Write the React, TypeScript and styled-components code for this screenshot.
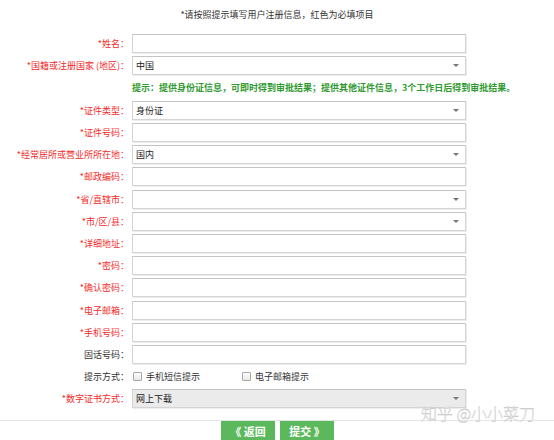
import styled, { createGlobalStyle } from "styled-components";

interface field {
  label: string;
  required: boolean;
  kind: "text" | "select";
  value?: string;
}

const GlobalStyle = createGlobalStyle`
  html, body {
    margin: 0;
    padding: 0;
    background: #ffffff;
  }

  body {
    font-family: "Noto Sans CJK SC", "DejaVu Sans", sans-serif;
    color: #333333;
  }
`;

const topFields: Array<field> = [
  { label: "姓名", required: true, kind: "text" },
  { label: "国籍或注册国家 (地区)", required: true, kind: "select", value: "中国" },
];

const restFields: Array<field> = [
  { label: "证件类型", required: true, kind: "select", value: "身份证" },
  { label: "证件号码", required: true, kind: "text" },
  { label: "经常居所或营业所所在地", required: true, kind: "select", value: "国内" },
  { label: "邮政编码", required: true, kind: "text" },
  { label: "省/直辖市", required: true, kind: "select" },
  { label: "市/区/县", required: true, kind: "select" },
  { label: "详细地址", required: true, kind: "text" },
  { label: "密码", required: true, kind: "text" },
  { label: "确认密码", required: true, kind: "text" },
  { label: "电子邮箱", required: true, kind: "text" },
  { label: "手机号码", required: true, kind: "text" },
  { label: "固话号码", required: false, kind: "text" },
];

const FormRow = ({ item }: { item: field }) => (
  <Row>
    <Label required={item.required}>
      {item.required ? "*" : ""}
      {item.label}：
    </Label>
    {item.kind === "text" ? (
      <TextBox />
    ) : (
      <SelectBox>
        <span>{item.value}</span>
        <Arrow />
      </SelectBox>
    )}
  </Row>
);

const App = () => {
  return (
    <Page>
      <GlobalStyle />
      <Title>*请按照提示填写用户注册信息，红色为必填项目</Title>
      {topFields.map((item) => (
        <FormRow key={item.label} item={item} />
      ))}
      <Hint>
        提示：提供身份证信息，可即时得到审批结果；提供其他证件信息，3个工作日后得到审批结果。
      </Hint>
      {restFields.map((item) => (
        <FormRow key={item.label} item={item} />
      ))}
      <Row>
        <Label required={false}>提示方式：</Label>
        <Options>
          <Option>
            <Check />
            手机短信提示
          </Option>
          <Option>
            <Check />
            电子邮箱提示
          </Option>
        </Options>
      </Row>
      <Row>
        <Label required>*数字证书方式：</Label>
        <SelectBox disabled>
          <span>网上下载</span>
          <Arrow />
        </SelectBox>
      </Row>
      <Footer>
        <Button>《 返回</Button>
        <Button>提交 》</Button>
      </Footer>
      <Watermark>知乎 @小小菜刀</Watermark>
    </Page>
  );
};

const Page = styled.div`
  position: relative;
  width: 554px;
  height: 440px;
  overflow: hidden;
  font-size: 9px;
`;

const Title = styled.div`
  height: 32.7px;
  line-height: 30px;
  text-align: center;
  color: #333333;
`;

const Row = styled.div`
  display: flex;
  align-items: center;
  height: 22.2px;
`;

const Label = styled.div<{ required: boolean }>`
  width: 129px;
  margin-right: 3px;
  text-align: right;
  white-space: nowrap;
  color: ${(props) => (props.required ? "#f22a2a" : "#333333")};
`;

const TextBox = styled.div`
  box-sizing: border-box;
  width: 334px;
  height: 19px;
  background: #ffffff;
  border: 1px solid #d4d4d4;
  border-top-color: #c4c4c4;
  box-shadow: 1px 1px 0 #ededed;
`;

const SelectBox = styled(TextBox)<{ disabled?: boolean }>`
  display: flex;
  align-items: center;
  justify-content: space-between;
  padding: 0 6px 0 3px;
  color: #222222;
  background: ${(props) => (props.disabled ? "#ebebeb" : "#ffffff")};
`;

const Arrow = styled.i`
  width: 0;
  height: 0;
  border-left: 3px solid transparent;
  border-right: 3px solid transparent;
  border-top: 3px solid #777777;
`;

const Hint = styled.div`
  height: 22.2px;
  line-height: 22.2px;
  padding-left: 132px;
  color: #2f9a2f;
  font-weight: bold;
  white-space: nowrap;
`;

const Options = styled.div`
  display: flex;
  align-items: center;
  gap: 42px;
  padding-left: 1px;
`;

const Option = styled.label`
  display: flex;
  align-items: center;
  gap: 4px;
  color: #333333;
`;

const Check = styled.span`
  box-sizing: border-box;
  width: 9px;
  height: 9px;
  border: 1px solid #a9a9a9;
  border-radius: 1px;
  background: linear-gradient(#ffffff, #e6e6e6);
`;

const Footer = styled.div`
  display: flex;
  justify-content: center;
  gap: 5px;
  margin-top: 10.5px;
  padding-left: 1px;
  border-top: 1px solid #e4e4e4;
`;

const Button = styled.div`
  width: 54px;
  height: 22px;
  line-height: 20px;
  text-align: center;
  background: #5cb85c;
  color: #ffffff;
  font-size: 11px;
  font-weight: bold;
`;

const Watermark = styled.div`
  position: absolute;
  left: 421px;
  top: 401px;
  font-size: 16px;
  font-weight: 300;
  color: #ffffff;
  -webkit-text-stroke: 0.4px #c4c4c4;
  white-space: nowrap;
`;

export default App;
